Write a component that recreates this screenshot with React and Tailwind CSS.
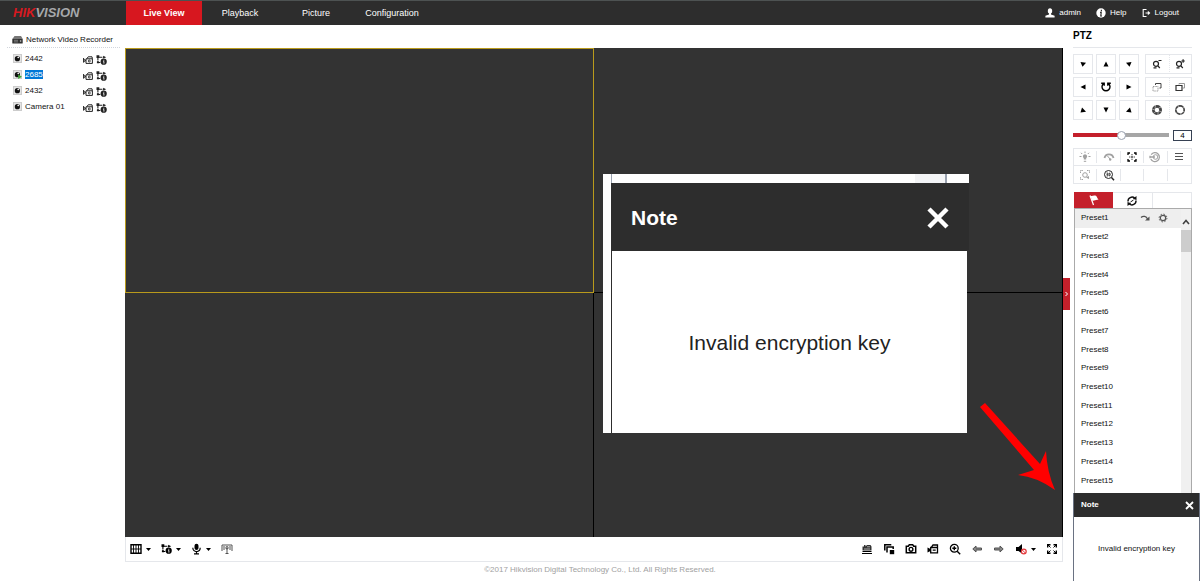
import React, { useState } from 'react';

const Icon = ({ w = 12, h = 12, className = '', children }) => (
  <svg width={w} height={h} viewBox={`0 0 ${w} ${h}`} className={`shrink-0 ${className}`} fill="none" stroke="currentColor" aria-hidden="true">
    {children}
  </svg>
);

const UserIcon = () => (
  <Icon w={10} h={10}>
    <g fill="currentColor" stroke="none">
      <ellipse cx="5" cy="3" rx="2.2" ry="2.7" />
      <path d="M4 5h2v1.6l3.6 1.2V9.5H.4V7.8L4 6.6z" />
    </g>
  </Icon>
);

const InfoIcon = () => (
  <Icon w={10} h={10}>
    <circle cx="5" cy="5" r="4.7" fill="currentColor" stroke="none" />
    <path d="M5.4 1.8v1.4M4 4.4h1.2L4.8 8H6" stroke="#2d2d2d" strokeWidth="1.2" />
  </Icon>
);

const LogoutIcon = () => (
  <Icon w={9} h={10}>
    <path d="M4.5 1.5H1.2v7h3.3M3.5 5H7" strokeWidth="1.1" />
    <path d="M5.8 2.8L8.4 5 5.8 7.2z" fill="currentColor" stroke="none" />
  </Icon>
);

const RecorderIcon = () => (
  <Icon w={11} h={8}>
    <path d="M2.5 0h6.5l1.5 2.5H.8z" fill="#777" stroke="none" />
    <rect x=".3" y="2.5" width="10.4" height="5" rx=".6" fill="#333" stroke="none" />
    <path d="M2 4.3h4M2 5.9h4" stroke="#999" strokeWidth=".7" />
    <circle cx="8.6" cy="5" r=".8" fill="#ccc" stroke="none" />
  </Icon>
);

const CameraDot = ({ live }) => (
  <Icon w={9} h={9}>
    <rect x=".5" y=".5" width="8" height="8" fill="#e4e4e4" stroke="#ccc" />
    <circle cx="4.4" cy="4.7" r="2.6" fill="#111" stroke="none" />
    <circle cx="5.2" cy="3.4" r=".8" fill="#fff" stroke="none" />
    {live && <path d="M5.2 4.6l3.8 2.2L5.2 9z" fill="#3fa535" stroke="none" />}
  </Icon>
);

const RecordIcon = () => (
  <Icon w={10} h={8}>
    <path d="M.6 2v4.6M.6 3.5l2.2.8M.6 5.6l2.2-1M3 2.8h6.4v4.6H3zM4 2.5L5.2.8H9L9.4 2.8" />
    <circle cx="6.3" cy="5" r="1" strokeWidth=".9" />
  </Icon>
);

const StreamIcon = () => (
  <Icon w={11} h={10}>
    <path d="M1.9 1v6.5h3M2 2.2h6" strokeWidth="1.1" strokeDasharray="4 .6" />
    <path d="M.5 .3h2.8v2.6H.5zM.9 6.4h2.2v1.9H.9zM7.2.8l3 1.4-3 1.3z" fill="currentColor" stroke="none" />
    <circle cx="7.7" cy="6.7" r="3.1" fill="currentColor" stroke="none" />
    <path d="M7.8 4.8v.9M7.2 6.4h.7v2.2" stroke="#fff" strokeWidth=".9" />
  </Icon>
);

const Caret = () => (
  <Icon w={5} h={3}>
    <path d="M0 0h5L2.5 3z" fill="currentColor" stroke="none" />
  </Icon>
);

const PtzArrow = ({ d }) => (
  <Icon w={8} h={8}>
    <path d={d} fill="currentColor" stroke="none" />
  </Icon>
);

const navItems = ['Live View', 'Playback', 'Picture', 'Configuration'];

const cameras = [
  { name: '2442' },
  { name: '2685', selected: true },
  { name: '2432' },
  { name: 'Camera 01' },
];

const presets = Array.from({ length: 15 }, (_, i) => `Preset${i + 1}`);

const ptzButtons = [
  { label: 'Up left', d: 'M1.5 2l5.5.8-3.5 4z' },
  { label: 'Up', d: 'M4 1.5L6.5 6.5h-5z' },
  { label: 'Up right', d: 'M6.5 2L1 2.8l3.5 4z' },
  { label: 'Left', d: 'M1.5 4L6.5 1.5v5z' },
  { label: 'Auto scan' },
  { label: 'Right', d: 'M6.5 4L1.5 1.5v5z' },
  { label: 'Down left', d: 'M3 1.5l4 4.2-5.5.8z' },
  { label: 'Down', d: 'M4 6.5L6.5 1.5h-5z' },
  { label: 'Down right', d: 'M5 1.5L1 5.7l5.5.8z' },
];

const lensButtons = [
  {
    label: 'Zoom out',
    icon: (
      <Icon>
        <circle cx="5" cy="5.8" r="2.5" strokeWidth="1.2" />
        <path d="M2.5 9.8h3M6.9 7.8L8.8 10M7.5 2.5h3" strokeWidth="1.2" />
      </Icon>
    ),
  },
  {
    label: 'Zoom in',
    icon: (
      <Icon>
        <circle cx="5" cy="5.8" r="2.5" strokeWidth="1.2" />
        <path d="M2.5 9.8h3M6.9 7.8L8.8 10M7.4 3h3.4M9.1 1.3v3.4" strokeWidth="1.2" />
      </Icon>
    ),
  },
  {
    label: 'Focus near',
    icon: (
      <Icon>
        <path d="M2 5.5h5v4.5H2z" stroke="#999" strokeDasharray="1 .6" />
        <path d="M4.5 4V2.5h5.5v4.5H8.5" stroke="#444" />
      </Icon>
    ),
  },
  {
    label: 'Focus far',
    icon: (
      <Icon>
        <path d="M5 3.5v-1h5.5v4.5H9" stroke="#999" />
        <path d="M2 4.5h6v5H2z" stroke="#333" strokeWidth="1.2" />
      </Icon>
    ),
  },
  {
    label: 'Iris close',
    icon: (
      <Icon>
        <circle cx="6" cy="6" r="3.6" strokeWidth="2.8" stroke="#444" />
        <path d="M4.5 1L4 4.6M10.5 3L7.6 4M11 8.2L8 7M6.8 11l.4-3.2M2 9.6l2.6-1.6M1 5l3 1" stroke="#fff" strokeWidth=".5" />
      </Icon>
    ),
  },
  {
    label: 'Iris open',
    icon: (
      <Icon>
        <circle cx="6" cy="6" r="4.2" strokeWidth="1.7" stroke="#444" />
        <path d="M4 1l.4 2M10.5 3L8.8 4.2M11 8.2L9 7.4M6.8 11V9M2 9.6l1.6-1.4M1 5l2 .4" stroke="#fff" strokeWidth=".5" />
      </Icon>
    ),
  },
];

const toolButtons = [
  {
    label: 'Light',
    icon: (
      <Icon className="text-neutral-400">
        <path d="M6 3.2a2.2 2.2 0 0 1 1.2 4v1.4H4.8V7.2a2.2 2.2 0 0 1 1.2-4z" fill="currentColor" stroke="none" />
        <path d="M6 .5v1.6M.5 5.5h2M9.5 5.5h2M2 1.8L3.2 3M10 1.8L8.8 3M4.8 10.3h2.4" />
      </Icon>
    ),
  },
  {
    label: 'Wiper',
    icon: (
      <Icon className="text-neutral-400">
        <path d="M1.5 7a4.6 4.6 0 0 1 9 0" strokeWidth="1.8" />
        <path d="M4.5 5L7 8" />
        <circle cx="7.2" cy="8.5" r="1.2" fill="currentColor" stroke="none" />
      </Icon>
    ),
  },
  {
    label: 'Auxiliary focus',
    icon: (
      <Icon className="text-black">
        <path d="M2 4V2h2M8 2h2v2M10 8v2H8M4 10H2V8" strokeWidth="1.3" />
        <path d="M5.3 5.3h1.4v1.4H5.3zM3.3 5.5h1v1h-1zM7.7 5.5h1v1h-1zM5.5 3.3h1v1h-1zM5.5 7.7h1v1h-1z" fill="currentColor" stroke="none" />
      </Icon>
    ),
  },
  {
    label: 'Lens initialization',
    icon: (
      <Icon className="text-neutral-400">
        <path d="M2.2 3.6a4.5 4.5 0 1 1-.4 4.4" strokeWidth="1.2" />
        <circle cx="6.5" cy="6" r="2.3" />
        <path d="M1 6h5M1 4.8v2.4" strokeWidth="1.3" />
      </Icon>
    ),
  },
  {
    label: 'Menu',
    icon: (
      <Icon className="text-neutral-600">
        <path d="M2 2.5h8M2 5.5h8M2 8.5h8" />
      </Icon>
    ),
  },
  {
    label: 'Manual tracking',
    icon: (
      <Icon className="text-neutral-400">
        <path d="M1.5 4V1.5H4M8 1.5h2.5V4M4 10.5H1.5V8" strokeDasharray="1.5 .6" />
        <circle cx="6" cy="6" r="2.3" />
        <path d="M7 8.5L10 7v3z" fill="currentColor" stroke="none" />
      </Icon>
    ),
  },
  {
    label: '3D zoom',
    icon: (
      <Icon className="text-neutral-800">
        <circle cx="5.5" cy="5.5" r="4" />
        <path d="M8.5 8.5l2.5 2.7" strokeWidth="1.5" />
        <path d="M3.5 4h1.3v3H3.5M3.5 5.5h1.2M6.2 4v3c1.6 0 1.6-3 0-3z" strokeWidth=".8" />
      </Icon>
    ),
  },
];

const playTools = [
  {
    label: 'Start all live view',
    icon: (
      <Icon>
        <path d="M1 10.5h10M1.5 8.5h9" />
        <path d="M1.5 7.5v-4H3V2h1.5v1.5L6 2h3.5l1 1.5v4z" fill="#333" stroke="none" />
        <path d="M6 3.8h3M3 6h6" stroke="#ccc" strokeWidth=".8" />
      </Icon>
    ),
  },
  {
    label: 'Stop all',
    icon: (
      <Icon>
        <path d="M1.8 7.5V1.7h6.5M4 9.5V4h6.2v2" strokeWidth="1.5" />
        <path d="M6.8 7h4.4v4.2H6.8z" fill="currentColor" stroke="none" />
      </Icon>
    ),
  },
  {
    label: 'Capture',
    icon: (
      <Icon>
        <path d="M1.3 3.2h2l1-1.4h3.4l1 1.4h2v6.6H1.3z" strokeWidth="1.5" />
        <circle cx="6" cy="6.3" r="1.9" strokeWidth="1.4" />
      </Icon>
    ),
  },
  {
    label: 'Record',
    icon: (
      <Icon>
        <path d="M3.7 4.5h6.8v5.3H3.7zM4.5 4.2L6 2h4.5v2.5M5.7 7.2h3" strokeWidth="1.3" />
        <path d="M.5 4.5l3 1.5v2l-3 1.5z" fill="currentColor" stroke="none" />
      </Icon>
    ),
  },
  {
    label: 'Digital zoom',
    icon: (
      <Icon>
        <circle cx="5.3" cy="5.3" r="3.9" strokeWidth="1.3" />
        <path d="M8.2 8.2l3 3M3.3 5.3h4M5.3 3.3v4" strokeWidth="1.4" />
      </Icon>
    ),
  },
  {
    label: 'Previous page',
    icon: (
      <Icon className="text-neutral-600">
        <path d="M5 3L1.8 6 5 9V7h5.5V5H5z" fill="#888" />
      </Icon>
    ),
  },
  {
    label: 'Next page',
    icon: (
      <Icon className="text-neutral-600">
        <path d="M7 3l3.2 3L7 9V7H1.5V5H7z" fill="#888" />
      </Icon>
    ),
  },
];

const Header = () => (
  <header className="flex h-[25px] items-stretch border-t border-[#4d5252] bg-[#2d2d2d] text-white">
    <div className="flex w-[126px] items-center pl-[13px] text-[13px] leading-4 font-bold italic">
      <span className="text-[#d71920]">HIK</span>
      <span className="text-[#a6a8ab]">VISION</span>
    </div>
    <nav className="flex">
      {navItems.map((item, i) => (
        <a
          key={item}
          href="#"
          className={`flex w-[76px] items-center justify-center text-[9px] leading-3 ${i === 0 ? 'bg-[#d7171f] font-bold' : ''}`}
        >
          {item}
        </a>
      ))}
    </nav>
    <div className="ml-auto flex items-center gap-[15px] pr-[21px]">
      <a href="#" className="flex items-center gap-1"><UserIcon />admin</a>
      <a href="#" className="flex items-center gap-1"><InfoIcon />Help</a>
      <a href="#" className="flex items-center gap-1"><LogoutIcon />Logout</a>
    </div>
  </header>
);

const CameraList = () => (
  <aside className="w-[125px] shrink-0 pt-[7px] pr-[5px] pl-[7px]">
    <h2 className="flex h-4 items-center gap-[3px] border-b border-dotted border-gray-300 pl-[5px]">
      <RecorderIcon />
      <span className="whitespace-nowrap">Network Video Recorder</span>
    </h2>
    <ul className="pt-[2px] pl-[6px]">
      {cameras.map((cam) => (
        <li key={cam.name} className="flex h-4 items-center gap-[3px]">
          <CameraDot live={cam.selected} />
          <span className={cam.selected ? 'bg-[#0078d7] leading-[9px] text-white' : 'leading-[9px]'}>{cam.name}</span>
          <span className="ml-auto flex items-center gap-[3px] pt-[3px] pr-[13px] text-[#222]">
            <RecordIcon />
            <StreamIcon />
          </span>
        </li>
      ))}
    </ul>
  </aside>
);

// Enlarged copy of the note shown over the video
const NoteCallout = () => (
  <div role="dialog" aria-label="Note" className="absolute top-[126px] right-[93px] h-[259px] w-[366px]">
    <div className="flex h-[9px] bg-white pl-2">
      <div className="flex-1 border-l border-gray-400" />
      <div className="mr-[22px] w-8 border-r-2 border-gray-400 bg-gray-100" />
    </div>
    <div className="flex h-[250px] flex-col border-l-8 border-white">
      <div className="flex h-[67px] shrink-0 items-center justify-between bg-[#2d2d2d] px-5 pt-[2px]">
        <h3 className="text-[21px] leading-6 font-bold text-white">Note</h3>
        <button type="button" aria-label="Close note" className="text-white">
          <Icon w={22} h={22}>
            <path d="M2 2l18 18M20 2L2 20" strokeWidth="4.5" />
          </Icon>
        </button>
      </div>
      <div className="mr-[2px] flex flex-1 items-center justify-center border-t border-l border-[#2d2d2d] bg-white pt-[2px] text-[21px] leading-6 text-[#222]">
        Invalid encryption key
      </div>
    </div>
  </div>
);

const VideoWall = () => (
  <div className="relative grid min-h-[489px] flex-1 grid-cols-2 grid-rows-2 border-r border-black bg-[#333]">
    <div className="border border-[#b99a1c]" />
    <div className="border-b border-black" />
    <div className="border-r border-black" />
    <div />
    <NoteCallout />
    <svg width="76" height="88" viewBox="0 0 76 88" className="absolute right-[6px] bottom-[46px]" aria-hidden="true">
      <path d="M0 4L5 0 60 61 66 48Q67 69 75 87 57 74 38 72L54 67z" fill="#f00" />
    </svg>
  </div>
);

const PlayToolbar = () => (
  <div className="flex h-[25px] items-center border-r border-b border-l border-gray-200 px-1 text-black">
    <div className="flex items-center gap-[10px]">
      <button type="button" aria-label="Window division" className="flex items-center gap-1">
        <Icon>
          <path d="M1 1.7h10v8.6H1z" strokeWidth="1.4" />
          <path d="M6 2v8M1 6h10M3.5 2v8M8.5 2v8" strokeWidth=".9" />
        </Icon>
        <Caret />
      </button>
      <button type="button" aria-label="Stream type" className="flex items-center gap-1">
        <StreamIcon />
        <Caret />
      </button>
      <button type="button" aria-label="Two-way audio" className="flex items-center gap-1">
        <Icon w={11} h={12}>
          <rect x="3.5" y=".8" width="4" height="6.2" rx="2" fill="currentColor" stroke="none" />
          <path d="M1.8 4.8c0 5 7.4 5 7.4 0M5.5 8.5v2.2M3 10.9h5" strokeWidth="1.2" />
        </Icon>
        <Caret />
      </button>
      <button type="button" aria-label="Alarm output">
        <Icon className="text-neutral-600">
          <path d="M1 2v6M3 3v4M11 2v6M9 3v4M1 2h10M6 5v6M4.5 10.5h3M5 3.8h2v2H5z" />
        </Icon>
      </button>
    </div>
    <div className="ml-auto flex items-center gap-[10px]">
      {playTools.map((tool) => (
        <button key={tool.label} type="button" aria-label={tool.label}>
          {tool.icon}
        </button>
      ))}
      <button type="button" aria-label="Audio off" className="flex items-center gap-1">
        <Icon>
          <path d="M1 4h2.5L7 1v9.5L3.5 8H1z" fill="currentColor" stroke="none" />
          <circle cx="8.8" cy="8.5" r="2.4" fill="#fff" stroke="#e5383b" strokeWidth="1.2" />
          <path d="M7.2 6.9l3.2 3.2" stroke="#e5383b" />
        </Icon>
        <Caret />
      </button>
      <button type="button" aria-label="Full screen">
        <Icon>
          <path d="M1.7 4.5V1.7h2.8M7.5 1.7h2.8v2.8M10.3 7.5v2.8H7.5M4.5 10.3H1.7V7.5" strokeWidth="1.4" />
          <path d="M2 2l2.5 2.5M10 2L7.5 4.5M10 10L7.5 7.5M2 10l2.5-2.5" />
        </Icon>
      </button>
    </div>
  </div>
);

const PtzControls = () => (
  <div className="flex gap-[6px] pt-[6px]">
    <div className="grid grid-cols-3 gap-[3px]">
      {ptzButtons.map((btn) => (
        <button
          key={btn.label}
          type="button"
          aria-label={btn.label}
          className="flex h-5 w-5 items-center justify-center border border-gray-200 text-black"
        >
          {btn.d ? (
            <PtzArrow d={btn.d} />
          ) : (
            <Icon>
              <path d="M3.6 2.6a4 4 0 1 0 4.8 0M1.2 2.2h3v2.6M10.8 2.2h-3v2.6" strokeWidth="1.4" />
            </Icon>
          )}
        </button>
      ))}
    </div>
    <div className="grid flex-1 grid-cols-2 gap-y-[3px]">
      {lensButtons.map((btn, i) => (
        <button
          key={btn.label}
          type="button"
          aria-label={btn.label}
          className={`flex h-5 items-center justify-center border-y border-gray-200 text-[#222] ${
            i % 2 === 0 ? 'border-l' : 'border-r border-l [border-left-style:dotted]'
          }`}
        >
          {btn.icon}
        </button>
      ))}
    </div>
  </div>
);

const PtzPanel = () => {
  const [speed, setSpeed] = useState(4);
  const fill = ((speed - 1) / 6) * 100;

  return (
    <aside className="relative flex w-[137px] shrink-0 flex-col pt-[3px] pr-2 pl-[10px]">
      <button
        type="button"
        aria-label="Collapse PTZ panel"
        className="absolute top-[253px] left-0 flex h-8 w-[7px] items-center justify-center bg-[#c4202b] text-white"
      >
        <Icon w={5} h={6}>
          <path d="M1.5 1l2 2-2 2" />
        </Icon>
      </button>
      <h2 className="h-5 border-b border-gray-200 text-[10px] leading-4 font-bold text-black">PTZ</h2>
      <PtzControls />
      <div className="flex h-7 items-center gap-1 pt-[2px]">
        <input
          type="range"
          aria-label="PTZ speed"
          min="1"
          max="7"
          value={speed}
          onChange={(e) => setSpeed(Number(e.target.value))}
          className="h-[4px] min-w-0 flex-1 appearance-none [&::-webkit-slider-thumb]:h-[9px] [&::-webkit-slider-thumb]:w-[9px] [&::-webkit-slider-thumb]:appearance-none [&::-webkit-slider-thumb]:rounded-full [&::-webkit-slider-thumb]:border [&::-webkit-slider-thumb]:border-gray-400 [&::-webkit-slider-thumb]:bg-white"
          style={{ background: `linear-gradient(to right, #c4202b ${fill}%, #a6a6a6 ${fill}%)` }}
        />
        <input
          type="text"
          aria-label="Speed value"
          readOnly
          value={speed}
          className="h-[11px] w-[19px] border border-gray-700 bg-white text-center text-[8px] leading-[9px] text-black"
        />
      </div>
      <div className="grid grid-cols-5 border border-gray-200">
        {Array.from({ length: 10 }, (_, i) => (
          <div key={i} className={`flex h-[17px] items-center justify-center ${i < 5 ? 'border-b border-gray-200' : ''}`}>
            <div className={`flex h-3 flex-1 items-center justify-center ${i % 5 < 4 ? 'border-r border-gray-200' : ''}`}>
              {toolButtons[i] && (
                <button type="button" aria-label={toolButtons[i].label}>
                  {toolButtons[i].icon}
                </button>
              )}
            </div>
          </div>
        ))}
      </div>
      <div className="mt-2 ml-[1px] grid h-4 grid-cols-3">
        <button type="button" aria-label="Presets" className="flex items-center justify-center bg-[#c4202b] text-white">
          <Icon>
            <path d="M2 1.5L5.5 11" strokeWidth="1.2" />
            <path d="M2.3 1.5c2 1.5 3-1 6 .5L10.5 6C8 5 6 7.5 4.2 6.5z" fill="currentColor" stroke="none" />
          </Icon>
        </button>
        <button type="button" aria-label="Patrols" className="flex items-center justify-center border-t border-r border-gray-200 text-[#111]">
          <Icon>
            <path d="M2 6.5a4 4 0 0 1 6.8-3.2M10 5.5a4 4 0 0 1-6.8 3.2" strokeWidth="1.4" />
            <path d="M10.5 1v4L6.8 3.8zM1.5 11V7l3.7 1.2z" fill="currentColor" stroke="none" />
            <path d="M4.5 7l3-2" />
          </Icon>
        </button>
        <button type="button" aria-label="Patterns" className="border-t border-r border-gray-200" />
      </div>
      <div className="ml-[1px] flex flex-1 border-x border-t border-[#aaa]">
        <ul className="flex h-[281px] flex-1 flex-col">
          {presets.map((name, i) => (
            <li key={name} className={`flex flex-1 items-center pl-[6px] ${i === 0 ? 'bg-[#eee]' : ''}`}>
              {name}
              {i === 0 && (
                <span className="ml-auto flex gap-2 pr-[13px] text-neutral-600">
                  <button type="button" aria-label="Call preset">
                    <Icon w={10} h={10}>
                      <path d="M1 4.5c2-2 5.5-1.5 6.5 1.5" strokeWidth="1.2" />
                      <path d="M9.5 3.5v4H5z" fill="currentColor" stroke="none" />
                    </Icon>
                  </button>
                  <button type="button" aria-label="Set preset">
                    <Icon w={10} h={10}>
                      <circle cx="5" cy="5" r="2.7" strokeWidth="1.2" />
                      <circle cx="5" cy="5" r="3.9" strokeDasharray="1.4 1.66" />
                    </Icon>
                  </button>
                </span>
              )}
            </li>
          ))}
        </ul>
        <div className="flex w-[10px] flex-col items-center bg-[#f0f0f0]">
          <div className="flex h-[21px] items-center pt-1 text-neutral-700">
            <Icon w={8} h={6}>
              <path d="M1 5l3-3.5L7 5" strokeWidth="1.6" />
            </Icon>
          </div>
          <div className="h-[22px] w-full bg-[#cdcdcd]" />
        </div>
      </div>
    </aside>
  );
};

const NotePopup = () => (
  <div role="alertdialog" aria-label="Invalid key note" className="fixed right-0 bottom-0 flex h-[88px] w-[127px] flex-col border-x border-gray-500 bg-white">
    <div className="flex h-6 items-center justify-between bg-[#2d2d2d] pr-[5px] pl-[7px] text-white">
      <h3 className="font-bold">Note</h3>
      <button type="button" aria-label="Close">
        <Icon w={9} h={9}>
          <path d="M1 1l7 7M8 1L1 8" strokeWidth="1.8" />
        </Icon>
      </button>
    </div>
    <div className="flex flex-1 items-center justify-center">Invalid encryption key</div>
  </div>
);

export default function App() {
  return (
    <div className="flex min-h-screen flex-col bg-white font-['Liberation_Sans',Arial,sans-serif] text-[8px] leading-3 text-[#111]">
      <Header />
      <div className="flex flex-1">
        <CameraList />
        <main className="flex min-w-0 flex-1 flex-col pt-[23px]">
          <VideoWall />
          <PlayToolbar />
        </main>
        <PtzPanel />
      </div>
      <footer className="h-[19px] pt-[2px] text-center text-neutral-400">
        ©2017 Hikvision Digital Technology Co., Ltd. All Rights Reserved.
      </footer>
      <NotePopup />
    </div>
  );
}
